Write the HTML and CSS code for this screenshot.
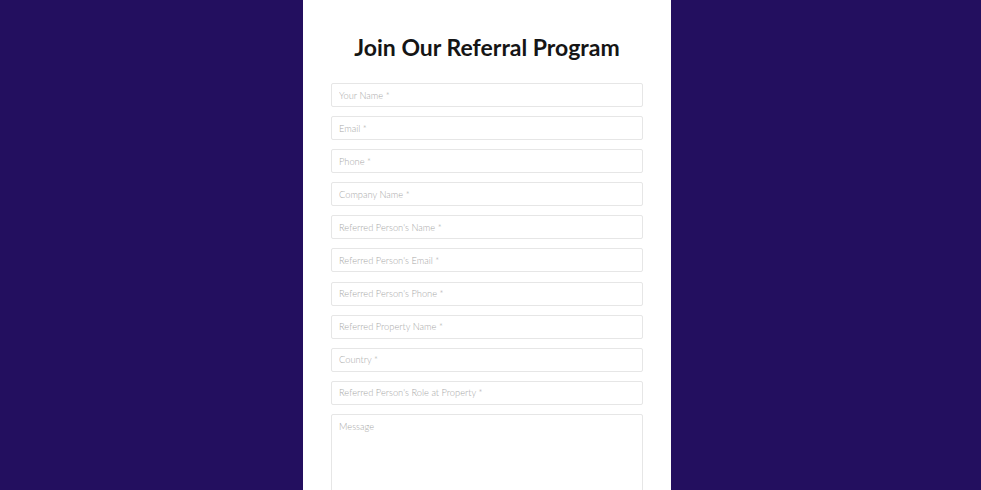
FILE: index.html
```html
<!DOCTYPE html>
<html lang="en">
<head>
<meta charset="utf-8">
<title>Join Our Referral Program</title>
<link rel="stylesheet" href="styles.css">
</head>
<body>
<div class="page">
  <div class="card">
    <h1 class="title">Join Our Referral Program</h1>
    <form class="form">
      <input class="field" type="text" placeholder="Your Name *">
      <input class="field" type="email" placeholder="Email *">
      <input class="field" type="tel" placeholder="Phone *">
      <input class="field" type="text" placeholder="Company Name *">
      <input class="field" type="text" placeholder="Referred Person's Name *">
      <input class="field" type="email" placeholder="Referred Person's Email *">
      <input class="field" type="tel" placeholder="Referred Person's Phone *">
      <input class="field" type="text" placeholder="Referred Property Name *">
      <input class="field" type="text" placeholder="Country *">
      <input class="field" type="text" placeholder="Referred Person's Role at Property *">
      <textarea class="field message" placeholder="Message"></textarea>
    </form>
  </div>
</div>
</body>
</html>
```

FILE: styles.css
```css
html, body {
  margin: 0;
  padding: 0;
  height: 100%;
  overflow: hidden;
}
body {
  background: #230f5f;
  font-family: Lato, "Open Sans", sans-serif;
}
.page {
  display: flex;
  justify-content: center;
  padding-right: 7px;
  min-height: 100%;
}
.card {
  width: 368px;
  box-sizing: border-box;
  background: #ffffff;
  padding: 31px 28px 40px;
}
.title {
  margin: 0 0 20px;
  text-align: center;
  font-size: 23px;
  font-weight: 700;
  color: #151515;
  line-height: 32px;
}
.form {
  display: flex;
  flex-direction: column;
  gap: 9.1px;
}
.field {
  display: block;
  width: 100%;
  box-sizing: border-box;
  height: 24px;
  margin: 0;
  padding: 0 7px;
  border: 1px solid #e6e6e6;
  border-radius: 2px;
  font-family: Lato, sans-serif;
  font-size: 9.3px;
  font-weight: 300;
  color: #333;
  background: #fff;
  outline: none;
}
.field::placeholder {
  color: #a8a8a8;
  font-weight: 300;
}
.message {
  height: 90px;
  padding: 6px 7px;
  resize: vertical;
}
```
